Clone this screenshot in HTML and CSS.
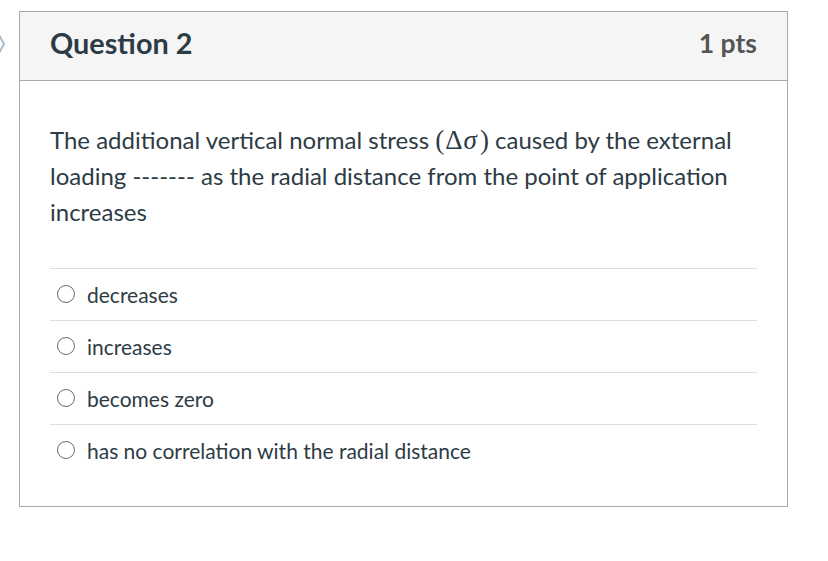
FILE: index.html
```html
<!DOCTYPE html>
<html lang="en">
<head>
<meta charset="utf-8">
<title>Question 2</title>
<link rel="stylesheet" href="styles.css">
</head>
<body>
<div class="page">
  <svg class="flag" width="14" height="20" viewBox="0 0 14 20" aria-hidden="true">
    <path d="M1 1 H8 L13 10 L8 19 H1" fill="none" stroke="#a9bac8" stroke-width="2" stroke-linejoin="round"/>
  </svg>
  <div class="card">
    <div class="card-header">
      <h2 class="q-title">Question 2</h2>
      <div class="q-points">1 pts</div>
    </div>
    <div class="card-body">
      <p class="q-text">The additional vertical normal stress <span class="math"><span class="paren">(</span><span class="delta">Δ</span><span class="sigma">σ</span><span class="paren">)</span></span> caused by the external loading ------- as the radial distance from the point of application increases</p>
      <ul class="answers">
        <li class="answer"><span class="radio"></span><span class="label">decreases</span></li>
        <li class="answer"><span class="radio"></span><span class="label">increases</span></li>
        <li class="answer"><span class="radio"></span><span class="label">becomes zero</span></li>
        <li class="answer"><span class="radio"></span><span class="label">has no correlation with the radial distance</span></li>
      </ul>
    </div>
  </div>
</div>
</body>
</html>
```

FILE: styles.css
```css
html, body {
  margin: 0;
  padding: 0;
  background: #ffffff;
}

.page {
  position: relative;
  padding: 11px 0 0 19px;
  font-family: Lato, "Liberation Sans", sans-serif;
  color: #2d3b45;
}

.flag {
  position: absolute;
  left: -9px;
  top: 34px;
}

.card {
  width: 769px;
  box-sizing: border-box;
  border: 1px solid #aaaaaa;
  background: #ffffff;
}

.card-header {
  display: flex;
  justify-content: space-between;
  align-items: center;
  height: 69px;
  box-sizing: border-box;
  padding: 0 30px 5px;
  background: #f5f5f5;
  border-bottom: 1px solid #aaaaaa;
}

.q-title {
  margin: 0;
  font-size: 28.8px;
  font-weight: 700;
  color: #2d3b45;
  line-height: 1;
}

.q-points {
  font-size: 26.5px;
  font-weight: 700;
  color: #555555;
  line-height: 1;
}

.card-body {
  padding: 41px 30px 30px;
}

.q-text {
  margin: 0 0 38px;
  font-size: 24px;
  line-height: 36px;
}

.math {
  font-family: "Liberation Serif", "DejaVu Serif", serif;
  font-size: 27px;
  line-height: 1;
}

.paren {
  font-size: 27px;
}

.delta {
  font-weight: 400;
  padding: 0 1px 0 1px;
}

.sigma {
  font-style: italic;
  padding-right: 3px;
}

.answers {
  list-style: none;
  margin: 0;
  padding: 0;
}

.answer {
  display: flex;
  align-items: center;
  height: 52px;
  box-sizing: border-box;
  border-top: 1px solid #dddddd;
  padding-left: 7px;
  padding-bottom: 1px;
}

.radio {
  width: 16px;
  height: 16px;
  border: 1.5px solid #6b6b6b;
  border-radius: 50%;
  flex: none;
  margin-right: 12px;
}

.label {
  font-size: 21px;
  line-height: 1;
  color: #2d3b45;
}
```
